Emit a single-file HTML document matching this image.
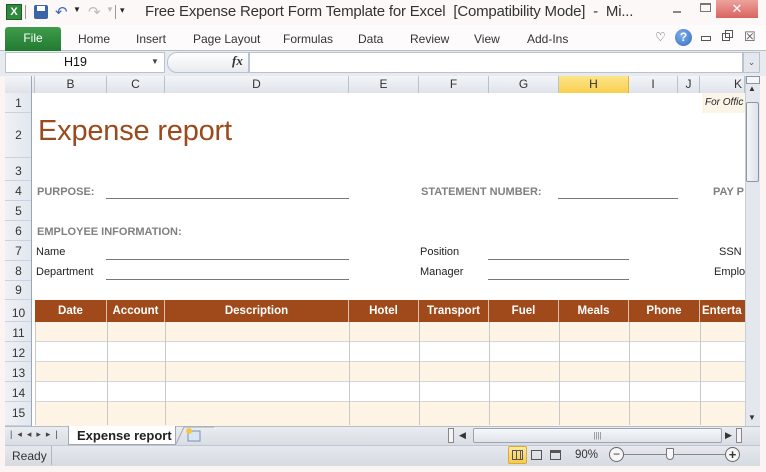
<!DOCTYPE html>
<html><head><meta charset="utf-8">
<style>
*{margin:0;padding:0;box-sizing:border-box}
body{width:766px;height:472px;overflow:hidden;background:#fcf3f3;font-family:"Liberation Sans",sans-serif;position:relative}
.a{position:absolute}
.t{font-size:12px;color:#222;white-space:nowrap}
.ch{position:absolute;top:76px;height:17px;border-right:1px solid #b7c2d0;background:linear-gradient(#f3f5f8,#dfe4ea);font-size:12px;color:#333;text-align:center;line-height:16px}
.rh{position:absolute;left:5px;width:27px;border-bottom:1px solid #c9d2de;background:linear-gradient(90deg,#eef1f5,#e2e7ee);font-size:12px;color:#333;text-align:center}
.hd{position:absolute;top:300px;height:22px;background:#a0491a;color:#fff;font-weight:bold;font-size:11.5px;text-align:center;line-height:22px;border-right:1px solid #d8c0b0}
.lbl{position:absolute;font-size:11px;font-weight:bold;color:#7f7f7f}
.ln{position:absolute;height:1px;background:#777}
.vl{position:absolute;top:322px;height:103px;width:1px;background:#c8c8c8}
</style></head><body>
<div class="a" style="left:0;top:0;width:766px;height:25px;background:#fdf8f8"></div>
<div class="a" style="left:6px;top:4px;width:16px;height:16px;background:#2c8a3a;border:1px solid #1d5c27;color:#fff;font-size:11px;font-weight:bold;text-align:center;line-height:14px">X</div>
<div class="a" style="left:25px;top:5px;width:1px;height:14px;background:#999"></div>
<div class="a" style="left:34px;top:5px;width:14px;height:14px;background:#3b63a8;border-radius:2px"></div>
<div class="a" style="left:37px;top:6px;width:8px;height:5px;background:#fff"></div>
<div class="a t" style="left:55px;top:3px;color:#3a6ab5;font-size:15px">↶</div>
<div class="a t" style="left:73px;top:5px;font-size:8px">▼</div>
<div class="a t" style="left:88px;top:3px;color:#bbb;font-size:15px">↷</div>
<div class="a t" style="left:106px;top:5px;font-size:8px;color:#bbb">▼</div>
<div class="a" style="left:115px;top:5px;width:1px;height:14px;background:#999"></div>
<div class="a t" style="left:120px;top:5px;font-size:9px">▾</div>
<div class="a t" style="left:145px;top:3px;font-size:15px;color:#333;letter-spacing:-0.2px">Free Expense Report Form Template for Excel &nbsp;[Compatibility Mode] &nbsp;- &nbsp;Mi...</div>
<div class="a" style="left:673px;top:11px;width:8px;height:2px;background:#888"></div>
<div class="a" style="left:700px;top:3px;width:11px;height:9px;border:1px solid #777;border-top:2px solid #777"></div>
<div class="a" style="left:716px;top:0;width:42px;height:18px;background:linear-gradient(#eca29e,#d9645f);color:#fff;text-align:center;font-size:13px;line-height:17px">✕</div>
<div class="a" style="left:0;top:25px;width:766px;height:26px;background:#fdfbfb;border-bottom:1px solid #b6bcc6"></div>
<div class="a" style="left:5px;top:27px;width:56px;height:24px;background:linear-gradient(#3f9c4b,#227a31);border-radius:3px 3px 0 0;color:#fff;font-size:12px;text-align:center;line-height:23px">File</div>
<div class="a t" style="left:78px;top:32px;color:#333">Home</div>
<div class="a t" style="left:136px;top:32px;color:#333">Insert</div>
<div class="a t" style="left:193px;top:32px;color:#333">Page Layout</div>
<div class="a t" style="left:283px;top:32px;color:#333">Formulas</div>
<div class="a t" style="left:358px;top:32px;color:#333">Data</div>
<div class="a t" style="left:410px;top:32px;color:#333">Review</div>
<div class="a t" style="left:474px;top:32px;color:#333">View</div>
<div class="a t" style="left:527px;top:32px;color:#333">Add-Ins</div>
<div class="a t" style="left:655px;top:30px;font-size:12px;color:#555">♡</div>
<div class="a" style="left:675px;top:29px;width:17px;height:17px;border-radius:50%;background:radial-gradient(circle at 40% 35%,#7fb0ea,#2f6cc0);color:#fff;font-weight:bold;font-size:12px;text-align:center;line-height:17px">?</div>
<div class="a" style="left:701px;top:36px;width:10px;height:5px;border:1px solid #555"></div>
<div class="a" style="left:722px;top:33px;width:8px;height:8px;border:1px solid #555"></div>
<div class="a" style="left:725px;top:30px;width:8px;height:8px;border:1px solid #555"></div>
<div class="a t" style="left:744px;top:29px;font-size:13px;color:#555">☒</div>
<div class="a" style="left:0;top:51px;width:766px;height:25px;background:#e7ebf0"></div>
<div class="a" style="left:5px;top:52px;width:160px;height:21px;background:#fff;border:1px solid #b9c2ce"></div>
<div class="a t" style="left:64px;top:55px;font-size:12.5px;color:#111">H19</div>
<div class="a t" style="left:151px;top:57px;font-size:8px;color:#444">▼</div>
<div class="a" style="left:167px;top:52px;width:82px;height:21px;background:linear-gradient(#fff,#e8ebef);border:1px solid #b9c2ce;border-radius:10px 0 0 10px"></div>
<div class="a t" style="left:232px;top:53px;font-family:'Liberation Serif',serif;font-style:italic;font-weight:bold;font-size:13px;color:#333">fx</div>
<div class="a" style="left:249px;top:52px;width:494px;height:21px;background:#fff;border:1px solid #b9c2ce"></div>
<div class="a" style="left:743px;top:52px;width:17px;height:21px;background:#e4e8ee;border:1px solid #b9c2ce;font-size:9px;text-align:center;line-height:19px;color:#555">⌄</div>
<div class="a" style="left:5px;top:76px;width:740px;height:350px;background:#fff"></div>
<div class="ch" style="left:5px;width:27px"></div>
<div class="ch" style="left:32px;width:3px"></div>
<div class="ch" style="left:35px;width:72px">B</div>
<div class="ch" style="left:107px;width:58px">C</div>
<div class="ch" style="left:165px;width:184px">D</div>
<div class="ch" style="left:349px;width:70px">E</div>
<div class="ch" style="left:419px;width:70px">F</div>
<div class="ch" style="left:489px;width:70px">G</div>
<div class="ch" style="left:559px;width:70px;background:linear-gradient(#fde58a,#f8cf4f);border-color:#e2b23a">H</div>
<div class="ch" style="left:629px;width:49px">I</div>
<div class="ch" style="left:678px;width:22px">J</div>
<div class="ch" style="left:700px;width:45px;text-align:right;padding-right:2px">K</div>
<div class="rh" style="top:93px;height:20px;line-height:20px">1</div>
<div class="rh" style="top:113px;height:45px;line-height:45px">2</div>
<div class="rh" style="top:158px;height:23px;line-height:27px">3</div>
<div class="rh" style="top:181px;height:20px;line-height:20px">4</div>
<div class="rh" style="top:201px;height:20px;line-height:20px">5</div>
<div class="rh" style="top:221px;height:20px;line-height:20px">6</div>
<div class="rh" style="top:241px;height:20px;line-height:20px">7</div>
<div class="rh" style="top:261px;height:20px;line-height:20px">8</div>
<div class="rh" style="top:281px;height:19px;line-height:19px">9</div>
<div class="rh" style="top:300px;height:22px;line-height:26px">10</div>
<div class="rh" style="top:322px;height:20px;line-height:22px">11</div>
<div class="rh" style="top:342px;height:20px;line-height:22px">12</div>
<div class="rh" style="top:362px;height:20px;line-height:22px">13</div>
<div class="rh" style="top:382px;height:20px;line-height:22px">14</div>
<div class="rh" style="top:402px;height:24px;line-height:22px">15</div>
<div class="a" style="left:31px;top:76px;width:1px;height:350px;background:#9aa6b5"></div>
<div class="a" style="left:702px;top:93px;width:43px;height:20px;background:#fbf5e8"></div>
<div class="a t" style="left:705px;top:97px;font-size:10px;font-style:italic;color:#222">For Offic</div>
<div class="a" style="left:38px;top:115px;font-size:29px;color:#9a4a1c;white-space:nowrap;letter-spacing:-0.2px">Expense report</div>
<div class="lbl" style="left:37px;top:186px">PURPOSE:</div>
<div class="ln" style="left:106px;top:198px;width:243px"></div>
<div class="lbl" style="left:421px;top:186px">STATEMENT NUMBER:</div>
<div class="ln" style="left:558px;top:198px;width:120px"></div>
<div class="lbl" style="left:713px;top:186px">PAY P</div>
<div class="lbl" style="left:37px;top:226px">EMPLOYEE INFORMATION:</div>
<div class="a t" style="left:36px;top:246px;font-size:11px">Name</div>
<div class="ln" style="left:106px;top:259px;width:243px"></div>
<div class="a t" style="left:36px;top:266px;font-size:11px">Department</div>
<div class="ln" style="left:106px;top:279px;width:243px"></div>
<div class="a t" style="left:420px;top:246px;font-size:11px">Position</div>
<div class="ln" style="left:488px;top:259px;width:141px"></div>
<div class="a t" style="left:420px;top:266px;font-size:11px">Manager</div>
<div class="ln" style="left:488px;top:279px;width:141px"></div>
<div class="a t" style="left:719px;top:246px;font-size:11px">SSN</div>
<div class="a t" style="left:714px;top:266px;font-size:11px">Emplo</div>
<div class="hd" style="left:35px;width:72px">Date</div>
<div class="hd" style="left:107px;width:58px">Account</div>
<div class="hd" style="left:165px;width:184px">Description</div>
<div class="hd" style="left:349px;width:70px">Hotel</div>
<div class="hd" style="left:419px;width:70px">Transport</div>
<div class="hd" style="left:489px;width:70px">Fuel</div>
<div class="hd" style="left:559px;width:70px">Meals</div>
<div class="hd" style="left:629px;width:71px">Phone</div>
<div class="hd" style="left:700px;width:45px;text-align:left;padding-left:2px;border:none">Enterta</div>
<div class="a" style="left:35px;top:322px;width:710px;height:20px;background:#fdf4e6;border-bottom:1px solid #d6d6d6"></div>
<div class="a" style="left:35px;top:342px;width:710px;height:20px;background:#fff;border-bottom:1px solid #d6d6d6"></div>
<div class="a" style="left:35px;top:362px;width:710px;height:20px;background:#fdf4e6;border-bottom:1px solid #d6d6d6"></div>
<div class="a" style="left:35px;top:382px;width:710px;height:20px;background:#fff;border-bottom:1px solid #d6d6d6"></div>
<div class="a" style="left:35px;top:402px;width:710px;height:24px;background:#fdf4e6"></div>
<div class="vl" style="left:35px"></div><div class="vl" style="left:107px"></div><div class="vl" style="left:165px"></div><div class="vl" style="left:349px"></div><div class="vl" style="left:419px"></div><div class="vl" style="left:489px"></div><div class="vl" style="left:559px"></div><div class="vl" style="left:629px"></div><div class="vl" style="left:700px"></div>
<div class="a" style="left:745px;top:76px;width:15px;height:350px;background:#e4e8ee;border-left:1px solid #c8ced8"></div>
<div class="a" style="left:746px;top:76px;width:14px;height:8px;border:1px solid #8a96a6;background:#f4f6f8"></div>
<div class="a t" style="left:748px;top:84px;font-size:8px;color:#333">▲</div>
<div class="a" style="left:746px;top:102px;width:13px;height:80px;background:linear-gradient(90deg,#f4f6f9,#dde2e9);border:1px solid #8a96a6;border-radius:2px"></div>
<div class="a t" style="left:748px;top:413px;font-size:8px;color:#333">▼</div>
<div class="a" style="left:5px;top:426px;width:755px;height:19px;background:linear-gradient(#e9ecf0,#d9dee5);border-top:1px solid #b6bcc6"></div>
<div class="a t" style="left:10px;top:429px;font-size:9px;color:#444;letter-spacing:5px">|◂◂▸▸|</div>
<div class="a" style="left:68px;top:426px;width:108px;height:19px;background:#fff;border:1px solid #a0a8b4;border-top:none"></div>
<div class="a t" style="left:77px;top:428px;font-size:13px;font-weight:bold;color:#222">Expense report</div>
<svg class="a" style="left:176px;top:426px" width="40" height="19"><path d="M0 18 L8 1 L38 1" fill="none" stroke="#a0a8b4"/><rect x="12" y="5" width="12" height="10" fill="#dbe6f4" stroke="#7890b0"/><circle cx="13" cy="5" r="3" fill="#f3c84a"/></svg>
<div class="a" style="left:448px;top:428px;width:6px;height:15px;border:1px solid #888;background:#f4f4f4"></div>
<div class="a t" style="left:459px;top:430px;font-size:9px;color:#333">◀</div>
<div class="a" style="left:473px;top:428px;width:249px;height:15px;background:linear-gradient(#f6f8fa,#dfe4ea);border:1px solid #9aa4b2;border-radius:2px;font-size:8px;text-align:center;color:#777;line-height:13px">||||</div>
<div class="a t" style="left:725px;top:430px;font-size:9px;color:#333">▶</div>
<div class="a" style="left:736px;top:428px;width:6px;height:15px;border:1px solid #888;background:#f4f4f4"></div>
<div class="a" style="left:5px;top:445px;width:755px;height:21px;background:linear-gradient(#e6e9ee,#d5dae1);border-top:1px solid #c0c6cf"></div>
<div class="a t" style="left:12px;top:449px;color:#333">Ready</div>
<div class="a" style="left:51px;top:446px;width:1px;height:19px;background:#b0b6c0"></div>
<div class="a" style="left:508px;top:446px;width:19px;height:18px;background:linear-gradient(#fde9a4,#f6c94a);border:1px solid #d9a93a;border-radius:2px"></div>
<div class="a" style="left:512px;top:450px;width:11px;height:10px;border:1px solid #555;background:repeating-linear-gradient(90deg,transparent 0 3px,#555 3px 4px)"></div>
<div class="a" style="left:531px;top:450px;width:11px;height:10px;border:1px solid #555"></div>
<div class="a" style="left:550px;top:450px;width:11px;height:10px;border:1px solid #555;border-top-width:3px"></div>
<div class="a t" style="left:575px;top:449px;font-size:11.5px;color:#333">90%</div>
<div class="a" style="left:609px;top:447px;width:15px;height:15px;border:1px solid #666;border-radius:50%;background:#f6f6f6;font-size:12px;text-align:center;line-height:12px;color:#333">−</div>
<div class="a" style="left:624px;top:454px;width:101px;height:1px;background:#888"></div>
<div class="a" style="left:666px;top:448px;width:8px;height:12px;background:#f8f8f8;border:1px solid #777;border-radius:1px 1px 4px 4px"></div>
<div class="a" style="left:725px;top:447px;width:15px;height:15px;border:1px solid #666;border-radius:50%;background:#f6f6f6;font-size:13px;text-align:center;line-height:13px;color:#333;font-weight:bold">+</div>
</body></html>
